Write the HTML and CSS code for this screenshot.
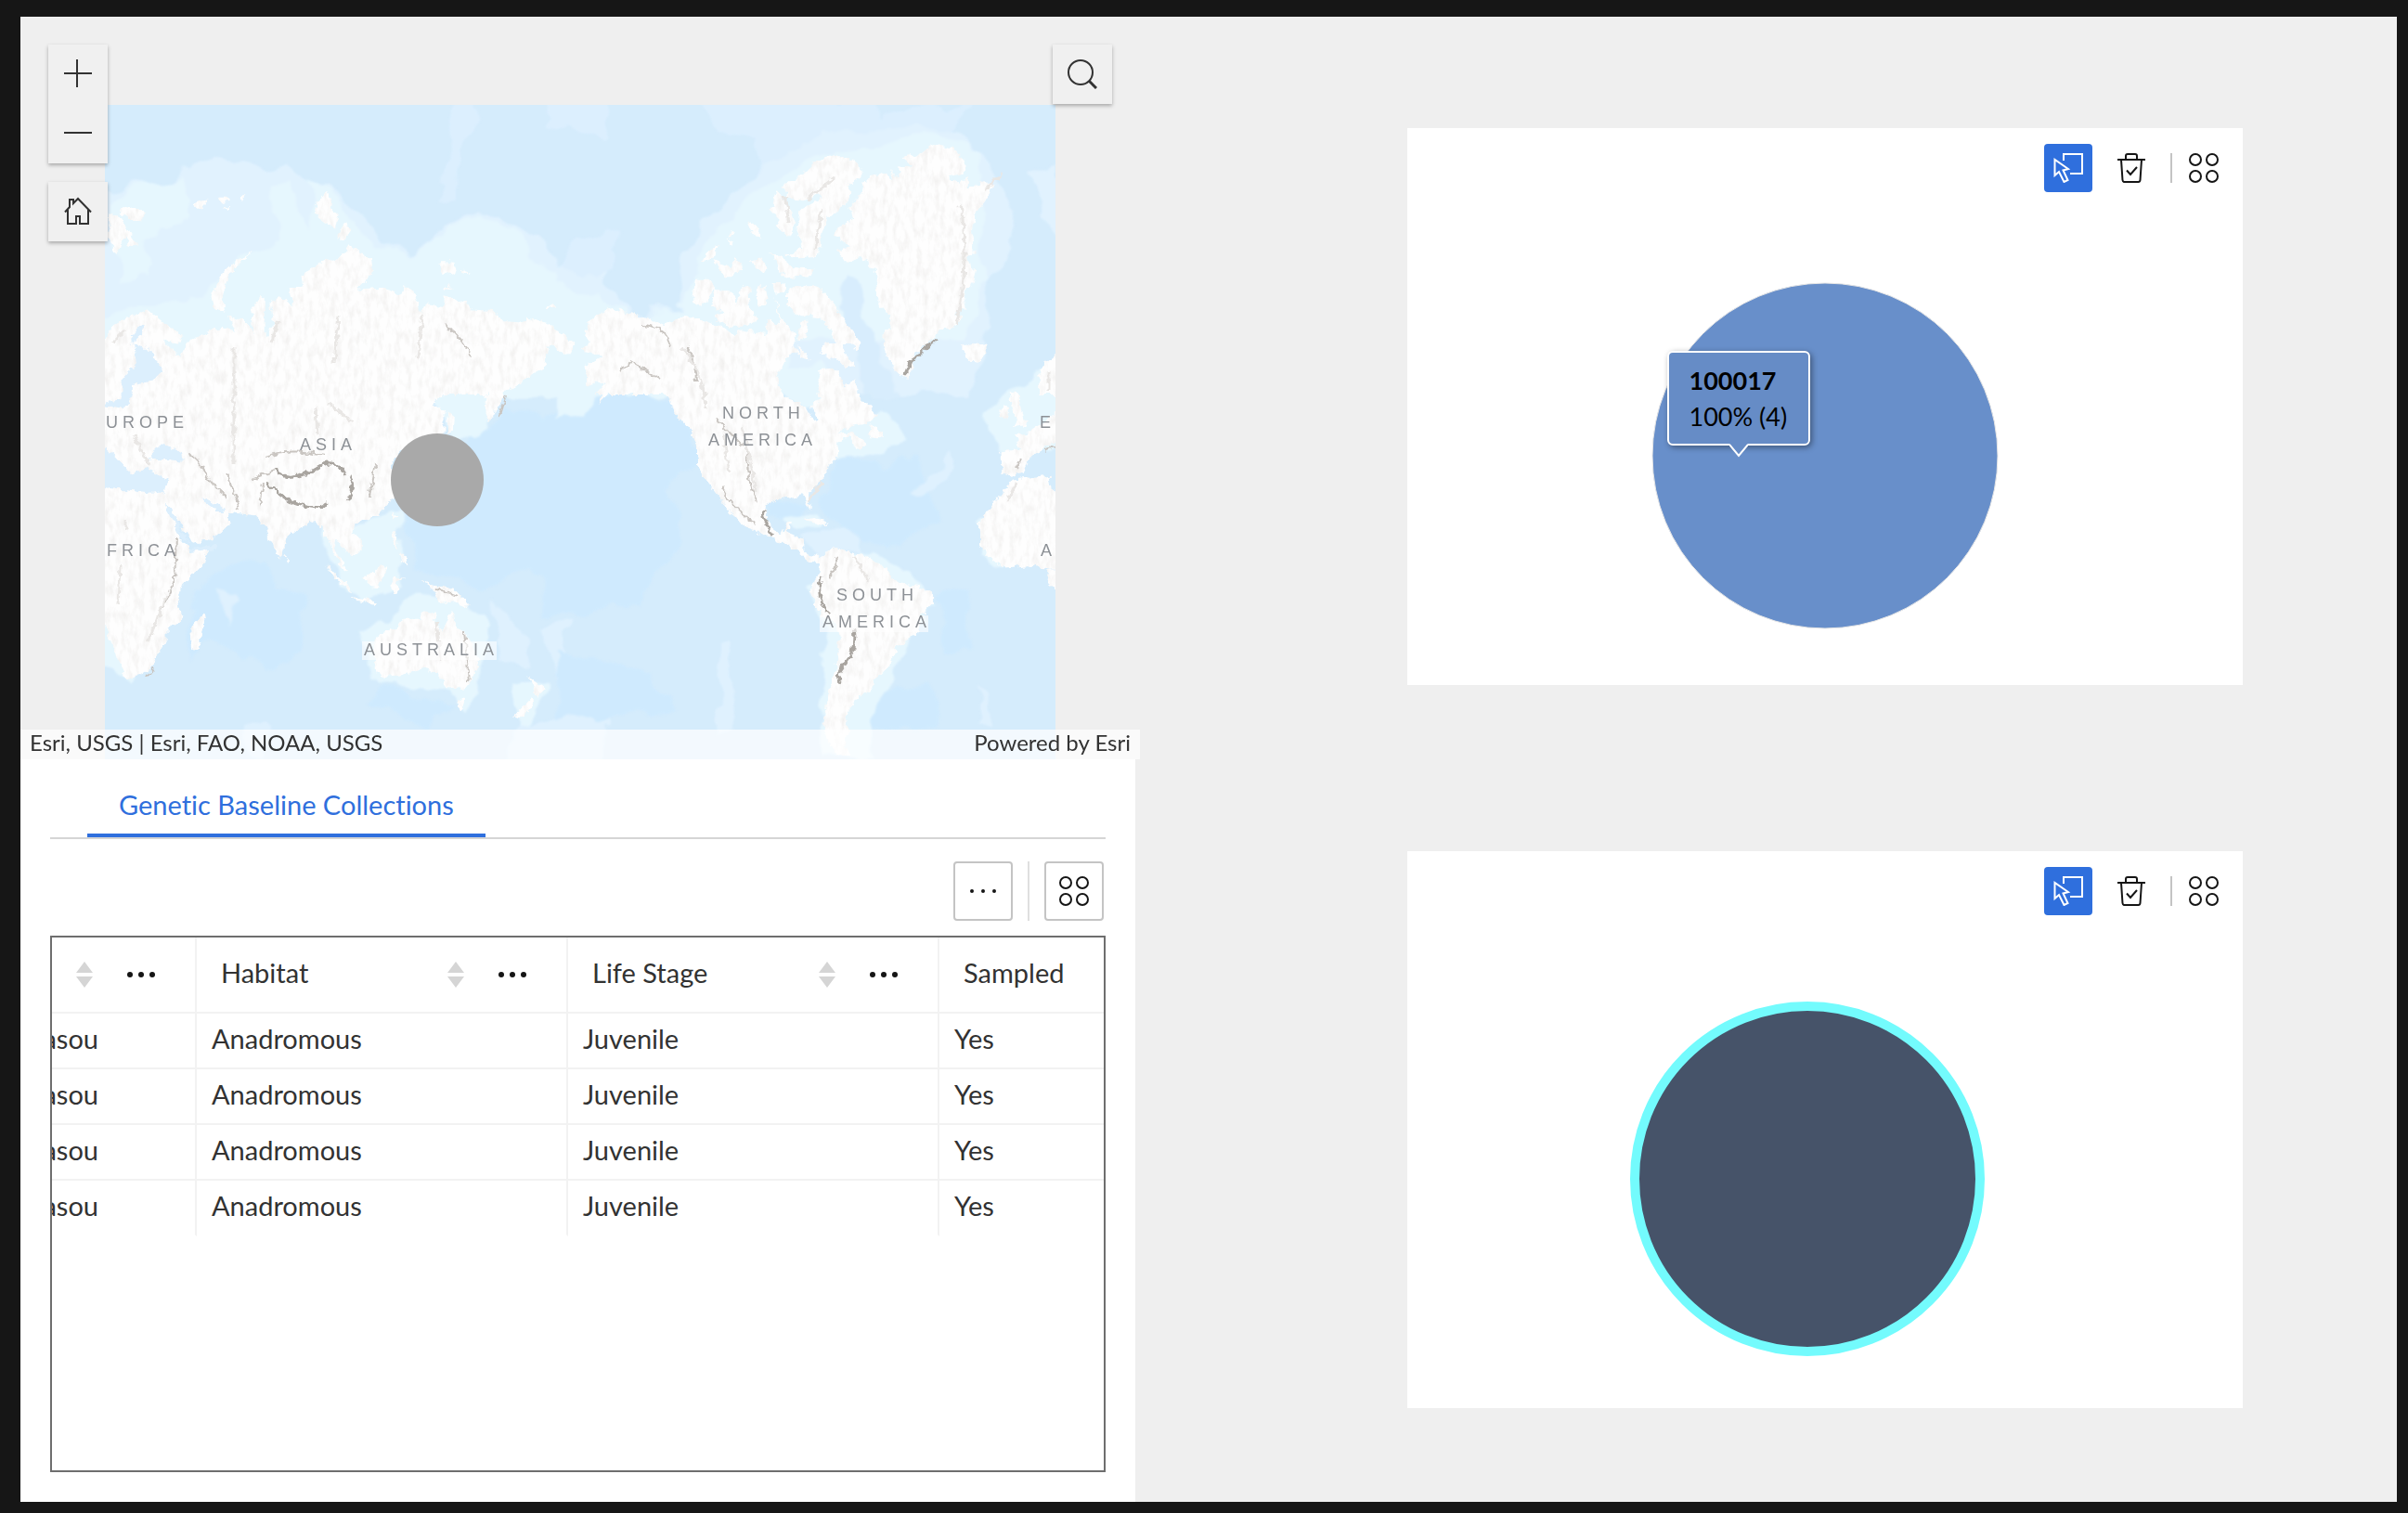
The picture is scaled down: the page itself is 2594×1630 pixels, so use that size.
FILE: index.html
```html
<!DOCTYPE html>
<html lang="en">
<head>
<meta charset="utf-8">
<title>Genetic Baseline Collections</title>
<link rel="stylesheet" href="styles.css">
</head>
<body>
<svg class="sprite" aria-hidden="true">
  <symbol id="i-grid" viewBox="0 0 32 32"><g fill="none" stroke="#151515" stroke-width="2"><circle cx="7" cy="7" r="6"/><circle cx="25" cy="7" r="6"/><circle cx="7" cy="25" r="6"/><circle cx="25" cy="25" r="6"/></g></symbol>
  <symbol id="i-trash" viewBox="0 0 32 32"><path d="M1 7H31M10 7V3Q10 1 12 1H20Q22 1 22 3V7M5 7L6.500 29Q6.700 31 8.500 31H23.500Q25.300 31 25.500 29L27 7M11 18.500L15 23L22 15" fill="none" stroke="#151515" stroke-width="2"/></symbol>
  <symbol id="i-select" viewBox="0 0 32 32"><path d="M11 8V1H31V22H18M1.500 7V24L6 20L11.500 31L15.500 29L10.500 18.500L16 17Z" fill="none" stroke="#fff" stroke-width="2"/></symbol>
</svg>
<div class="app">
  <section class="left">
    <div class="map">
      <svg class="world" viewBox="113 113 1024 705" role="img" aria-label="World map">
        <defs>
          <filter id="coast" x="0" y="0" width="100%" height="100%" color-interpolation-filters="sRGB">
            <feTurbulence type="fractalNoise" baseFrequency=".12" numOctaves="3" seed="4" result="n"/>
            <feDisplacementMap in="SourceGraphic" in2="n" scale="9" xChannelSelector="R" yChannelSelector="G" result="land"/>
            <feTurbulence type="fractalNoise" baseFrequency=".16 .07" numOctaves="3" seed="12"/>
            <feColorMatrix values="0 0 0 0 .78  0 0 0 0 .76  0 0 0 0 .74  .450 0 0 0 -.19" result="grain"/>
            <feComposite in="grain" in2="land" operator="in" result="relief"/>
            <feMerge><feMergeNode in="land"/><feMergeNode in="relief"/></feMerge>
          </filter>
          <filter id="shore" x="0" y="0" width="100%" height="100%"><feTurbulence type="fractalNoise" baseFrequency=".12" numOctaves="3" seed="4" result="n"/><feDisplacementMap in="SourceGraphic" in2="n" scale="9" xChannelSelector="R" yChannelSelector="G"/></filter>
          <filter id="sea" x="0" y="0" width="100%" height="100%"><feTurbulence type="fractalNoise" baseFrequency=".03" numOctaves="3" seed="9" result="n"/><feDisplacementMap in="SourceGraphic" in2="n" scale="26" xChannelSelector="R" yChannelSelector="G"/><feGaussianBlur stdDeviation="1"/></filter>
          <filter id="soft"><feTurbulence type="fractalNoise" baseFrequency=".15" numOctaves="2" result="n"/><feDisplacementMap in="SourceGraphic" in2="n" scale="8" xChannelSelector="R" yChannelSelector="G"/><feGaussianBlur stdDeviation=".7"/></filter>
        </defs>
        <rect x="113" y="113" width="1024" height="705" fill="#d5ecfc"/>
        <g filter="url(#sea)">
          <g transform="scale(.40816 .33333)">
            <path fill="#e1f2fe" d="M240 600L300 615 420 590 500 530 590 505 680 540 770 545 860 600 930 670 1000 770 1080 805 1170 730 1250 680 1340 720 1420 770 1470 870 1600 850V1280H240Z"/>
            <path fill="#e6f7fe" d="M300 640L480 560 500 700 380 760 400 900 320 920ZM820 570L900 660 940 780 1080 810 1200 720 1260 700 1370 750 1440 870 1600 930V1280H240V1020L400 990 540 980 600 850 740 780 710 600 760 590 820 760Z"/>
            <path fill="#dceffe" d="M1210 320H1270L1240 440 1210 480 1195 650H1160L1180 500 1200 410ZM1440 320H1600V450L1450 410Z"/>
          </g>
          <g transform="translate(600) scale(.40816 .33333)">
            <path fill="#dceffe" d="M380 320H820L860 370 1100 320 1040 420 1060 500 660 480 540 580 520 440 420 420ZM50 760L160 740 150 860 100 920 0 860Z"/>
            <path fill="#e1f2fe" d="M0 860L100 900 200 1000 330 1000 330 850 380 720 500 600 560 520 660 450 760 420 900 410 1060 430 1120 500 1180 600 1210 720 1190 830 1130 910 1140 1060 1080 1280H0ZM1250 560L1330 540V800L1280 700Z"/>
            <path fill="#e6f7fe" d="M0 900L200 1010 340 1000 400 760 560 590 700 500 850 470 1000 440 1110 490 1130 900 1080 1100H620V1280H0Z"/>
            <path fill="#d8edfd" d="M760 880L800 900 810 1000 840 1120 900 1280H800L790 1120 740 990Z"/>
          </g>
          <g transform="translate(0 400) scale(.40816 .33333)">
            <path fill="#cfeafe" d="M1240 250L1340 110 1450 190 1600 150V780L1500 760 1400 620 1280 700 1100 640 1060 470ZM560 640L700 600 720 700 800 720 790 900 700 960 560 860 500 940 520 700ZM1000 1010L1200 1080 1120 1130 960 1070Z"/>
            <path fill="#e6f7fe" d="M1145 105L1200 40 1320 -20V60L1260 230 1190 210ZM850 500L1060 460 1060 700 1000 740 900 700ZM960 850L1110 730 1280 770 1270 1040 1230 1110 1180 1030 980 1000ZM240 -20H450V600L350 1010 240 900ZM1350 1000L1450 1020 1370 1180Z"/>
            <path fill="#dff1fe" d="M570 700L620 740 610 840 590 780ZM1430 820L1500 800 1470 1000 1450 900ZM650 1130L720 1140 700 1260 640 1220ZM1340 1150L1600 1100V1280H1350ZM1300 740L1390 860 1400 980 1320 930Z"/>
          </g>
          <g transform="translate(600 400) scale(.40816 .33333)">
            <path fill="#cfeafe" d="M-40 160L220 50 290 100 350 190 365 290 300 400 330 560 250 640 220 760 100 790 -40 780ZM740 290L960 290 1010 480 870 580 760 500 690 430ZM560 430L650 420 640 490 560 480ZM1010 720L1080 700 1100 900 1010 910ZM850 1030L980 1010 1020 1150 840 1160ZM0 900L240 980 320 1100 0 1130Z"/>
            <path fill="#e6f7fe" d="M0 -20H250L180 60 0 170ZM560 -20H700V110H620ZM720 200L860 130 930 210 880 260 740 290ZM600 480L690 450 700 500 620 510ZM800 580L900 640 1000 740 950 860 850 1060 830 1240 700 1260V1100L720 820 660 700ZM1130 140L1200 40 1330 -20V260H1160ZM1110 480H1180V640L1110 600Z"/>
            <path fill="#dff1fe" d="M640 540L760 500 800 540V580L680 590ZM440 880H470L460 1160 420 1160ZM1110 1000L1150 1150 1110 1130ZM930 400L1030 270 1050 310 960 410Z"/>
          </g>
        </g>
        <g fill="#fefefe" filter="url(#coast)">
          <g transform="scale(.40816 .33333)">
            <path d="M260 1130L300 1050 330 1030 390 1000 430 1040 480 1080 475 1110 430 1100 475 1155 500 1100 560 1065 590 1055 620 1070 605 1020 660 1050 670 1090 665 1000 690 950 700 960V1090L720 1055 710 980 740 960 775 985 760 930 800 930 795 890 850 845 900 830 920 790 980 840 985 880 940 935 1000 930 1060 950 1065 920 1090 940 1110 1010 1120 985 1170 990V955L1230 975 1240 1000 1300 1005 1320 1035 1385 1040 1390 1025 1440 1040 1480 1075 1515 1110 1500 1145 1450 1115 1435 1190 1380 1230 1320 1275H260Z"/>
            <path d="M670 815L640 840 600 900 585 970 595 1010 565 1000 560 960 585 885 620 845ZM290 690L315 700 340 740 360 795 340 790 330 760 310 825 300 800 285 760ZM325 665L380 680 375 712 345 710 320 690ZM510 660L550 640 530 680ZM575 635H600L605 650 580 655ZM635 640L648 625 640 650ZM590 670L605 665 595 680ZM860 620L880 660 870 670 890 700 885 740 850 710 830 690 840 650ZM910 715L927 750 915 770 890 775ZM1155 850L1195 850 1205 875 1170 888ZM1215 870L1245 885H1225ZM1180 920L1195 935H1175ZM1440 995L1460 985 1465 997ZM1540 1130L1600 1060V1145ZM1545 1050L1568 1075Z"/>
          </g>
          <g transform="translate(600) scale(.40816 .33333)">
            <path d="M75 1060L100 1020 145 995 200 1015 280 1050 340 1020 400 1040 470 1080 480 1065 550 1080 555 1035 600 1050 620 1100 635 1140 605 1155 580 1220V1275H100L140 1220 80 1250 75 1180 120 1150 65 1130 85 1110ZM0 1075L45 1115 35 1145 0 1120Z"/>
            <path d="M725 505H765L805 545V570L770 600 780 620 740 690 715 700 700 750 690 830 640 835 605 825 650 800 635 760 640 680 700 640 690 625 640 655 610 630 595 600 640 570 680 520ZM580 615L600 650 620 690 630 720 610 765 580 730 590 710 565 680ZM500 715L530 740 540 765 515 755ZM455 745L470 750 455 765ZM450 770L465 775 460 795ZM425 795L415 830 380 850 400 810ZM415 840L455 860 470 830 495 865 460 895 440 895ZM510 845L540 835 555 870 545 880ZM560 815L600 830 610 860 660 865 680 870 670 890 610 898 585 880 575 830ZM365 905H400L420 930 400 960 385 990 358 975ZM420 935L465 945 475 985 485 925 505 925 510 1000 528 1030 500 1055H450L415 1025 440 1010 410 985ZM530 925H550L560 965 540 990 525 965ZM570 915H600V940L575 950ZM610 990V940L630 925H690L740 1000 770 1050 800 1105 795 1135 770 1110H750L785 1185 760 1190 740 1165 695 1140 710 1110H735L725 1070 690 1025 640 1020ZM575 955L590 1030 630 1080 625 1120H595ZM640 1040H665L660 1090 635 1100ZM635 1120L670 1160 640 1150ZM690 1195L730 1190 750 1220 760 1275H690ZM785 1225L790 1275H770Z"/>
            <path d="M910 510L950 500 995 465 1045 480 1078 520 1075 560 1030 570 1060 590 1085 570V610L1130 585 1153 600 1130 650 1105 690 1095 740 1100 820 1085 830 1105 880 1095 930 1070 940 1080 1000 1050 1010 1075 1030 1040 1060 1010 1070 990 1105 945 1140 930 1225 900 1215 880 1170 862 1110 865 1070 880 1050V1020L850 985 840 880 825 850 800 835 760 850 740 810 775 795 730 765 740 735 785 710 770 670 805 625 810 585 855 555 885 580 880 550 905 580V535L940 540ZM1068 1120L1095 1110 1130 1115 1133 1145 1100 1168 1080 1155ZM1272 1190L1330 1130V1275H1275Z"/>
          </g>
          <g transform="translate(0 400) scale(.40816 .33333)">
            <path d="M260 -5H1310L1270 30 1200 40 1145 105 1170 130V200L1130 235 1060 260 1030 300 1055 390 1000 465 935 490 930 520 955 550V575L930 600 900 560 890 545 885 580 920 650 895 625 880 590 875 550 850 530V500L820 485 755 540 750 580 740 605 720 570 700 500 670 465 600 455 610 490 570 535 510 560 490 520 440 430 470 530 500 575 550 575 540 620 480 695 470 740 480 800 440 830V885L420 900 400 960 370 985 330 990 310 930 280 830 260 780Z"/>
            <path d="M500 830L540 780 545 810 520 895 505 900ZM750 590L765 610 758 625ZM860 625L890 660 930 700V720L880 665ZM930 732L990 745 985 752 940 744ZM955 665L990 650 1010 620 1022 640 1000 700 975 695ZM1030 690L1040 665 1070 668 1045 680 1055 705 1040 720ZM1032 515L1045 520 1048 575 1036 550ZM1055 590L1075 590 1076 625 1062 615ZM1033 455L1045 460 1037 485ZM1110 680L1140 690 1200 705 1240 760 1200 745 1160 750 1150 710ZM1000 850L1045 835 1065 800 1110 800 1120 775 1145 780V815L1170 835 1190 770 1205 830 1235 850 1250 900 1265 930 1250 990 1225 1030 1180 1020 1150 975 1110 960 1060 985 1005 990 990 940V880ZM1205 1060L1228 1062 1217 1095ZM1395 985L1440 1025 1415 1055 1412 1035ZM1355 1115L1400 1060 1407 1075 1375 1120ZM1340 -5H1420L1395 20 1345 30 1325 90 1290 165 1280 130 1285 80 1310 40ZM1183 130L1195 150 1192 205H1180Z"/>
          </g>
          <g transform="translate(600 400) scale(.40816 .33333)">
            <path d="M190 -5L240 30 290 60 310 130 350 190 370 250V310L400 360 470 470 455 460 430 410 500 510 570 540 620 570 660 608 700 625 700 600 665 598 650 570V540L600 515 625 490 605 490 590 525 560 500 550 430 600 410 650 400 672 450 664 395 700 350 720 300 740 280 745 230 770 205 790 255 815 235 780 195 740 200 770 180 830 165 845 140 800 90 785 25 760 50 735 20 700 10 690 60 700 90 670 110 690 160 680 165 655 110 610 90 575 30 590 -5ZM90 -5H190L160 40 110 105 130 50ZM830 175L860 195V215L825 210ZM648 480L680 474 718 498H700Z"/>
            <path d="M695 600L735 570 800 590 820 600 870 635 890 680 960 700 990 720V750L960 790 950 850 895 895 880 950 850 990 835 995 830 1030 790 1055 775 1090 760 1120 770 1160 760 1210 770 1240H740L715 1200 705 1160 715 1050 735 960 745 870 740 820 700 790 670 720 675 680 695 650ZM1195 60L1215 70 1230 150 1245 160 1235 175 1205 180 1215 155 1200 120ZM1170 115L1190 120V150L1170 155ZM1275 -5H1330V40L1285 55ZM1205 205L1240 200 1280 170 1330 120V235L1290 240 1250 280 1230 330 1200 335 1172 325 1170 262 1225 255ZM1200 350L1300 335 1305 380 1330 390V640L1270 635 1265 625 1175 635 1140 600 1115 560V490L1150 430 1170 400ZM1300 640L1330 640V720L1295 680Z"/>
          </g>
        </g>
        <g fill="#dceffd" filter="url(#shore)">
          <g transform="translate(0 400) scale(.40816 .33333)">
            <path d="M260 105L320 90V30L360 -30 345 -110 375 -150 380 -130 345 -90 400 -70 430 0 400 35 350 45V75L325 120ZM270 240L300 270 345 330 385 315 445 345 435 390 400 395 330 385 270 375ZM395 260L430 235 480 265 485 290 440 285 395 285ZM435 425L450 440 497 555 475 535ZM535 405L560 420 595 450 570 450 545 430ZM495 575L575 560 570 575 505 588Z"/>
          </g>
        </g>
        <g class="relief" filter="url(#soft)">
          <path stroke="#a9a5a0" stroke-width="3" d="M297 504Q302 516 316 514T345 502T372 512M288 520Q305 540 330 545T350 540M376 512Q384 525 374 540M885 622Q878 645 893 660M920 676Q924 700 910 715T908 735M822 550Q824 565 832 577M975 404L982 388 1008 366"/>
          <path stroke="#c9c5c1" stroke-width="2" d="M202 488Q215 495 222 510T245 535M284 520L280 545M286 492Q310 482 350 490M272 516L296 506M245 510L258 548M405 500L398 535M190 580L188 625Q178 650 170 665M165 720L158 730M900 600Q905 610 893 622M805 480Q802 510 815 540M770 450L800 480M778 525Q790 550 815 565M470 634L492 642M545 425L538 448M500 680L505 735M480 350Q500 365 508 385M690 350Q715 350 722 372M740 375Q748 385 750 410M1100 495L1095 505M1137 480L1125 485M668 400L680 390 710 408"/>
          <path stroke="#e9e7e5" stroke-width="3" d="M252 375V500M455 340L450 385M340 440L342 470M355 435L380 455M120 370L135 355M135 560V570M220 560M130 610L128 650M180 640L160 690M1035 220Q1045 290 1030 350M900 190L870 215M885 225L878 270M845 210L850 240M735 375Q758 400 760 440M780 470L785 510M800 460L815 530M885 520L870 540M920 600L935 625M470 670L475 710M365 340L360 390M300 345L292 370M145 470L160 500M1130 400V420M1085 540L1095 520M1080 185L1060 205"/>
        </g>
        <path class="label-halo" d="M390 691H535V711H390ZM883 663H1000V681H883Z"/>
        <g class="labels">
          <text x="114" y="461">UROPE</text><text x="323" y="485">ASIA</text><text x="115" y="599">FRICA</text>
          <text x="392" y="706">AUSTRALIA</text><text x="778" y="451">NORTH</text><text x="763" y="480">AMERICA</text>
          <text x="901" y="647">SOUTH</text><text x="886" y="676">AMERICA</text><text x="1120" y="461">E</text><text x="1121" y="599">A</text>
        </g>
        <circle cx="471" cy="517" r="50" fill="#a9a9a9"/>
      </svg>
      <div class="map-tools">
        <div class="tool-group">
          <button class="tool" aria-label="Zoom in"><svg width="32" height="32"><path d="M1 15H31M15 0V30" stroke="#323232" stroke-width="2"/></svg></button>
          <button class="tool" aria-label="Zoom out"><svg width="32" height="32"><path d="M1 15H31" stroke="#323232" stroke-width="2"/></svg></button>
        </div>
        <div class="tool-group">
          <button class="tool" aria-label="Default view"><svg width="32" height="32" fill="none" stroke="#323232" stroke-width="2"><path d="M2 16.500L7 11V3H11V7L16 2L30 16.500M5 14V29H14V21H18V29H27V14"/></svg></button>
        </div>
      </div>
      <div class="tool-group map-search"><button class="tool" aria-label="Search"><svg width="32" height="32" fill="none" stroke="#323232"><circle cx="14" cy="14" r="13" stroke-width="2"/><path d="M23 23L31 31" stroke-width="3"/></svg></button></div>
      <div class="attribution"><span>Esri, USGS | Esri, FAO, NOAA, USGS</span><span>Powered by <a href="#">Esri</a></span></div>
    </div>
    <div class="panel">
      <div class="tabs" role="tablist"><button class="tab" role="tab" aria-selected="true">Genetic Baseline Collections</button></div>
      <div class="table-tools">
        <button class="boxed" aria-label="More"><svg width="32" height="32" fill="#151515"><circle cx="4" cy="16" r="2"/><circle cx="16" cy="16" r="2"/><circle cx="28" cy="16" r="2"/></svg></button>
        <span class="rule"></span>
        <button class="boxed" aria-label="Actions"><svg width="32" height="32"><use href="#i-grid"/></svg></button>
      </div>
      <div class="grid">
        <table>
          <thead><tr>
            <th><div class="head"><span></span><svg width="18" height="28"><path d="M0 12L9 0L18 12ZM0 16H18L9 28Z" fill="#d5d5d5"/></svg><button aria-label="Column options"><svg width="30" height="8" fill="#151515"><circle cx="3" cy="4" r="3"/><circle cx="15" cy="4" r="3"/><circle cx="27" cy="4" r="3"/></svg></button></div></th>
            <th><div class="head"><span>Habitat</span><svg width="18" height="28"><path d="M0 12L9 0L18 12ZM0 16H18L9 28Z" fill="#d5d5d5"/></svg><button aria-label="Habitat options"><svg width="30" height="8" fill="#151515"><circle cx="3" cy="4" r="3"/><circle cx="15" cy="4" r="3"/><circle cx="27" cy="4" r="3"/></svg></button></div></th>
            <th><div class="head"><span>Life Stage</span><svg width="18" height="28"><path d="M0 12L9 0L18 12ZM0 16H18L9 28Z" fill="#d5d5d5"/></svg><button aria-label="Life Stage options"><svg width="30" height="8" fill="#151515"><circle cx="3" cy="4" r="3"/><circle cx="15" cy="4" r="3"/><circle cx="27" cy="4" r="3"/></svg></button></div></th>
            <th><div class="head"><span>Sampled</span></div></th>
          </tr></thead>
          <tbody>
            <tr><td>asou</td><td>Anadromous</td><td>Juvenile</td><td>Yes</td></tr>
            <tr><td>asou</td><td>Anadromous</td><td>Juvenile</td><td>Yes</td></tr>
            <tr><td>asou</td><td>Anadromous</td><td>Juvenile</td><td>Yes</td></tr>
            <tr><td>asou</td><td>Anadromous</td><td>Juvenile</td><td>Yes</td></tr>
          </tbody>
        </table>
      </div>
    </div>
  </section>
  <section class="right">
    <article class="card">
      <div class="card-tools">
        <button class="icon active" aria-label="Select"><svg width="32" height="32"><use href="#i-select"/></svg></button>
        <button class="icon" aria-label="Clear selection"><svg width="32" height="32"><use href="#i-trash"/></svg></button>
        <span class="rule short"></span>
        <button class="icon last" aria-label="Actions"><svg width="32" height="32"><use href="#i-grid"/></svg></button>
      </div>
      <svg class="chart" viewBox="0 0 900 530" role="img" aria-label="Pie chart, 100017 100%"><circle cx="450" cy="283" r="186" fill="#688fca" stroke="#e6e6e6"/></svg>
      <div class="tip"><strong>100017</strong><span>100% (4)</span><svg class="tip-arrow" width="20" height="18"><path d="M0 0H20L10 13Z" fill="#668cc6"/><path d="M0 1L10 13L20 1" fill="none" stroke="#fff" stroke-width="2"/></svg></div>
    </article>
    <article class="card">
      <div class="card-tools">
        <button class="icon active" aria-label="Select"><svg width="32" height="32"><use href="#i-select"/></svg></button>
        <button class="icon" aria-label="Clear selection"><svg width="32" height="32"><use href="#i-trash"/></svg></button>
        <span class="rule short"></span>
        <button class="icon last" aria-label="Actions"><svg width="32" height="32"><use href="#i-grid"/></svg></button>
      </div>
      <svg class="chart" viewBox="0 0 900 530" role="img" aria-label="Pie chart, selected"><circle cx="431" cy="283" r="186" fill="#465369" stroke="#73fbfd" stroke-width="10"/></svg>
    </article>
  </section>
</div>
</body>
</html>
```
FILE: styles.css
```css
* { box-sizing: border-box; }
body {
  margin: 0;
  min-height: 100vh;
  display: flex;
  padding: 18px 12px 12px 22px;
  background: #161616;
  color: #323232;
  font: 29px/36px Lato, "Open Sans", sans-serif;
  font-variant-ligatures: none;
}
button { padding: 0; border: 0; background: none; font: inherit; color: inherit; font-variant-ligatures: inherit; }
svg { display: block; }
.sprite { position: absolute; width: 0; height: 0; }
.app { flex: 1; display: grid; grid-template-columns: 1201fr 1359fr; background: #efefef; min-width: 0; }
.left { display: flex; flex-direction: column; min-width: 0; }

.map { position: relative; padding: 95px 86px 0 91px; height: 800px; flex: none; }
.world { width: 100%; height: auto; }
.relief { fill: none; }
.label-halo { fill: #fff; opacity: .6; }
.labels { font: 18px "Liberation Sans", sans-serif; letter-spacing: 5px; fill: #8d9196; }
.map-tools { position: absolute; left: 30px; top: 30px; display: flex; flex-direction: column; gap: 20px; }
.map-search { position: absolute; right: 25px; top: 30px; }
.tool-group { background: #f0f0f0; box-shadow: 0 2px 4px rgba(0, 0, 0, .3); }
.tool { width: 64px; height: 64px; display: flex; align-items: center; justify-content: center; }
.attribution {
  position: absolute; left: 0; right: -5px; bottom: 0;
  display: flex; justify-content: space-between;
  padding: 0 10px 4px;
  background: rgba(255, 255, 255, .7);
  font-size: 24px; line-height: 28px;
}
.attribution a { color: inherit; text-decoration: none; }

.panel { flex: 1; display: flex; flex-direction: column; padding: 20px 32px 32px; background: #fff; min-width: 0; }
.tabs { border-bottom: 2px solid #d5d5d5; padding-left: 40px; }
.tab { height: 64px; padding: 0 34px 2px; color: #2f6fdd; border-bottom: 4px solid #2f6fdd; }
.table-tools { display: flex; justify-content: flex-end; gap: 16px; padding: 24px 2px 16px; }
.boxed { width: 64px; height: 64px; border: 2px solid #c4c4c4; border-radius: 4px; display: grid; place-items: center; }
.rule { width: 2px; background: #dfdfdf; }

.grid { flex: 1; border: 2px solid #6e6e6e; overflow: hidden; display: flex; justify-content: flex-start; }
table { width: 1600px; flex: none; align-self: flex-start; margin-left: -244px; table-layout: fixed; border-collapse: separate; border-spacing: 0; }
th, td { width: 400px; border-right: 2px solid #f2f2f2; border-bottom: 2px solid #f2f2f2; text-align: left; font-weight: 400; }
th { height: 82px; padding: 0 43px 0 26px; }
td { height: 60px; padding: 0 16px 4px; }
tr:last-child td { border-bottom-color: transparent; }
td:first-child { padding-right: 104px; text-align: right; }
.head { display: flex; align-items: center; gap: 37px; }
.head span { flex: 1; padding-bottom: 4px; }

.right { display: flex; flex-direction: column; align-items: center; justify-content: center; gap: 179px; padding: 19px 0 0 126px; min-width: 0; }
.card { position: relative; width: 900px; max-width: 100%; background: #fff; }
.card-tools { display: flex; justify-content: flex-end; align-items: center; padding: 17px 16px 1px; }
.icon { width: 52px; height: 52px; border-radius: 4px; display: grid; place-items: center; margin-right: 16px; }
.icon.last { margin: 0 0 0 8px; }
.active { background: #2f6fdd; }
.short { height: 32px; background: #c4c4c4; }
.chart { width: 100%; height: auto; }
.tip {
  position: absolute; left: 280px; top: 240px;
  display: flex; flex-direction: column;
  width: 154px; padding: 10px 22px;
  border: 2px solid #fff; border-radius: 6px;
  background: #668cc6; color: #000;
  font-size: 27px; line-height: 39px; white-space: nowrap;
  box-shadow: 2px 2px 6px rgba(0, 0, 0, .4);
}
.tip-arrow { position: absolute; left: 65px; top: 98px; }
```
